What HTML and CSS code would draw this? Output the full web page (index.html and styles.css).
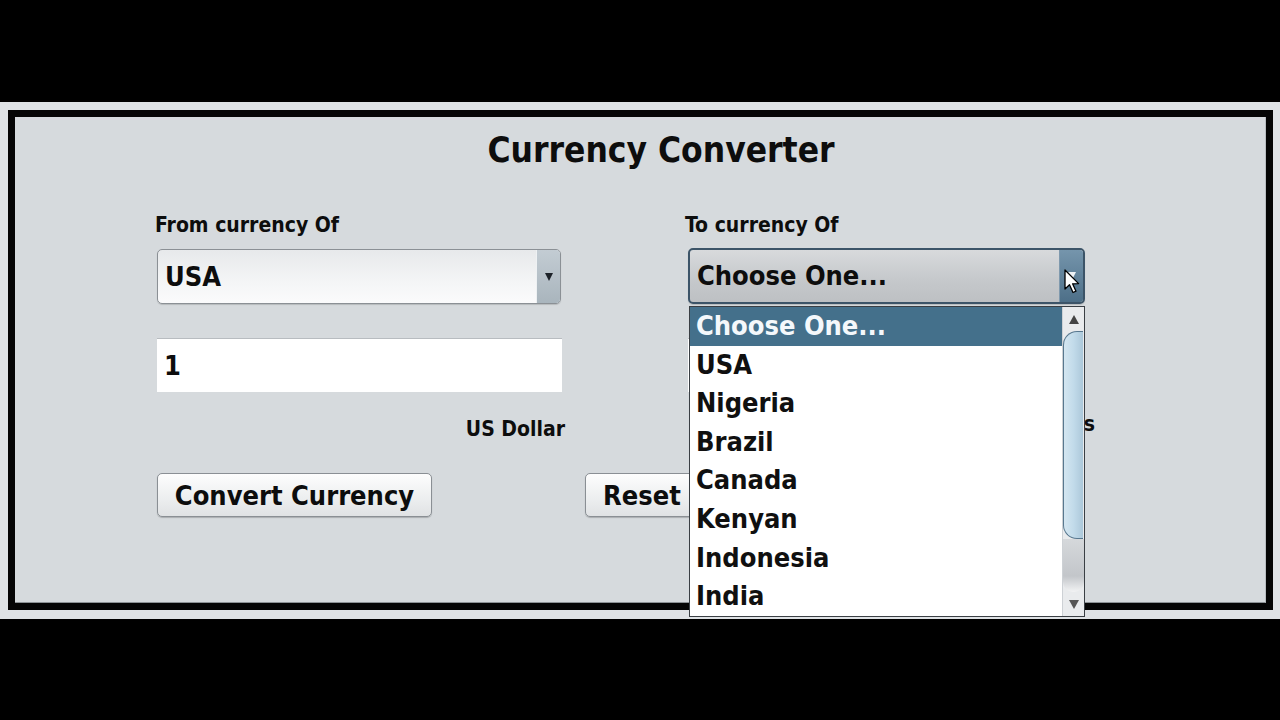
FILE: index.html
```html
<!DOCTYPE html>
<html>
<head>
<meta charset="utf-8">
<title>Currency Converter</title>
<link rel="stylesheet" href="styles.css">
</head>
<body>
<div class="topbar"></div>
<div class="band">
  <div class="frame">
    <div class="panel">
      <h1 class="title">Currency Converter</h1>
      <div class="columns">
        <div class="col col-left">
          <div class="label">From currency Of</div>
          <div class="select">
            <span class="select-text">USA</span>
            <span class="select-arrow"><span class="tri-down"></span></span>
          </div>
          <div class="field">1</div>
          <div class="unit">US Dollar</div>
        </div>
        <div class="col col-right">
          <div class="label">To currency Of</div>
          <div class="select-wrap">
            <div class="select select-open">
              <span class="select-text">Choose One...</span>
              <span class="select-arrow arrow-open"><span class="tri-down tri-light"></span></span>
            </div>
            <svg class="cursor" width="18" height="26" viewBox="0 0 18 26">
              <path d="M1 1 L1 20 L5.5 15.8 L9 23.5 L12 22.2 L8.6 14.8 L14.6 14.6 Z" fill="#fff" stroke="#000" stroke-width="1.3" stroke-linejoin="round"/>
            </svg>
            <div class="dropdown">
              <div class="options">
                <div class="opt opt-sel">Choose One...</div>
                <div class="opt">USA</div>
                <div class="opt">Nigeria</div>
                <div class="opt">Brazil</div>
                <div class="opt">Canada</div>
                <div class="opt">Kenyan</div>
                <div class="opt">Indonesia</div>
                <div class="opt">India</div>
              </div>
              <div class="scrollbar">
                <span class="sb-btn"><span class="tri-up"></span></span>
                <div class="sb-track">
                  <div class="sb-thumb"></div>
                  <div class="sb-rest"></div>
                </div>
                <span class="sb-btn"><span class="tri-down tri-small"></span></span>
              </div>
            </div>
          </div>
          <div class="field field-right"></div>
          <div class="unit unit-right">Currencies</div>
        </div>
      </div>
      <div class="buttons">
        <button class="btn btn-convert">Convert Currency</button>
        <button class="btn btn-reset">Reset</button>
      </div>
    </div>
  </div>
</div>
</body>
</html>
```
FILE: styles.css
```css
* { box-sizing: border-box; }
html, body { margin: 0; padding: 0; }
body {
  width: 1280px;
  height: 720px;
  background: #000;
  overflow: hidden;
  font-family: "DejaVu Sans Condensed", "DejaVu Sans", sans-serif;
  font-stretch: condensed;
  font-weight: bold;
  color: #0d0d0d;
}
.topbar { height: 102px; }
.band {
  height: 517px;
  background: #dfe2e5;
  padding: 8px 7px 9px 8px;
}
.frame {
  height: 500px;
  border: 7px solid #050505;
  background: #d6dadd;
}
.panel {
  height: 100%;
  border-bottom: 1px solid #8d9296;
  border-right: 1px solid #b7bcc0;
}
.title {
  margin: 0;
  padding: 12px 0 0 42px;
  text-align: center;
  font-size: 35px;
  line-height: 42px;
  font-weight: bold;
}
.columns {
  display: flex;
  gap: 120px;
  padding-left: 140px;
  margin-top: 41px;
}
.col { display: flex; flex-direction: column; }
.col-left { width: 410px; }
.col-right { width: 412px; }
.label {
  font-size: 21px;
  line-height: 26px;
}
.select {
  margin: 11px 0 0 2px;
  width: 404px;
  height: 55px;
  border: 1px solid #8b9095;
  border-radius: 5px;
  background: linear-gradient(#e7e9eb, #f4f5f6 60%, #fbfbfc);
  display: flex;
  align-items: center;
  overflow: hidden;
  box-shadow: 0 1px 1px rgba(0,0,0,0.15);
}
.select-text {
  flex: 1;
  padding-left: 7px;
  font-size: 27px;
  line-height: 32px;
}
.select-arrow {
  width: 24px;
  align-self: stretch;
  border-left: 1px solid #eef1f3;
  background: linear-gradient(#c3ccd3, #a9b5bd);
  display: flex;
  align-items: center;
  justify-content: center;
}
.tri-down {
  width: 0; height: 0;
  border-left: 4px solid transparent;
  border-right: 4px solid transparent;
  border-top: 8px solid #1c2228;
}
.tri-light { border-top-color: #eef2f5; }
.tri-small { border-top-color: #555; border-left-width: 5px; border-right-width: 5px; border-top-width: 9px; }
.tri-up {
  width: 0; height: 0;
  border-left: 5px solid transparent;
  border-right: 5px solid transparent;
  border-bottom: 9px solid #444;
}
.select-wrap { position: relative; }
.select-open {
  margin-top: 10px;
  margin-left: 3px;
  width: 397px;
  height: 56px;
  border: 2px solid #3c5468;
  background: linear-gradient(#d8dadc, #c6c9cc 55%, #bdc0c3);
}
.arrow-open {
  border-left: 1px solid #7f99ad;
  background: linear-gradient(#7595ac, #4d6f88);
}
.cursor {
  position: absolute;
  left: 379px;
  top: 31px;
  z-index: 3;
}
.dropdown {
  position: absolute;
  left: 4px;
  top: 68px;
  width: 396px;
  height: 311px;
  border: 1px solid #3a3f44;
  background: #fff;
  display: flex;
  z-index: 2;
}
.options { flex: 1; }
.opt {
  height: 38.6px;
  line-height: 38.6px;
  padding-left: 6px;
  font-size: 27px;
  color: #101010;
}
.opt-sel {
  background: #44708b;
  color: #f4f8fb;
}
.scrollbar {
  width: 22px;
  display: flex;
  flex-direction: column;
  background: #e9ebed;
  border-left: 1px solid #cdd1d5;
}
.sb-btn {
  height: 24px;
  display: flex;
  align-items: center;
  justify-content: center;
}
.sb-track {
  flex: 1;
  display: flex;
  flex-direction: column;
}
.sb-thumb {
  height: 208px;
  margin-right: 1px;
  border: 1px solid #58788f;
  border-right: none;
  border-radius: 14px 0 0 14px;
  background: linear-gradient(90deg, #d4e6f1, #c2dbea 50%, #acc8da);
}
.sb-rest {
  flex: 1;
  border-radius: 0 0 10px 10px;
  background: linear-gradient(#d5d8db, #c3c6ca 70%, #f2f3f4);
}
.field {
  margin: 34px 0 0 2px;
  width: 405px;
  height: 54px;
  background: #fff;
  border-top: 1px solid #b8bcc0;
  padding-left: 7px;
  font-size: 27px;
  line-height: 53px;
}
.field-right { margin-left: 3px; width: 397px; }
.unit {
  margin-top: 24px;
  text-align: right;
  font-size: 21px;
  line-height: 26px;
}
.unit-right { margin-right: 2px; margin-top: 19px; }
.buttons {
  display: flex;
  padding-left: 142px;
  margin-top: 31px;
  gap: 153px;
}
.btn {
  height: 44px;
  border: 1px solid #8a8f94;
  border-radius: 5px;
  background: linear-gradient(#fdfdfd, #eceeef 60%, #e0e2e4);
  font-family: inherit;
  font-stretch: condensed;
  font-weight: bold;
  font-size: 27px;
  color: #0d0d0d;
  padding: 0;
  white-space: nowrap;
  box-shadow: 0 1px 1px rgba(0,0,0,0.2);
}
.btn-convert { width: 275px; }
.btn-reset { width: 130px; text-align: left; padding-left: 17px; }
```
